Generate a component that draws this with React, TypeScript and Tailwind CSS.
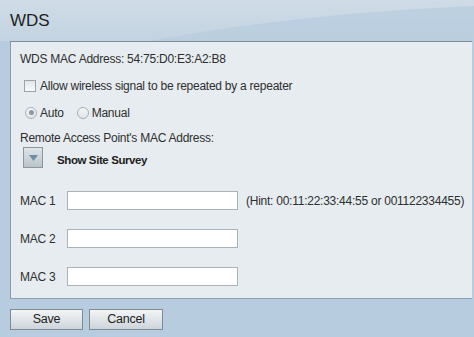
import React from 'react';

const font = { fontFamily: '"Liberation Sans", Arial, sans-serif' };

function Radio({ checked }: { checked?: boolean }) {
  return (
    <span className="flex h-[12px] w-[12px] items-center justify-center rounded-full border border-[#a7b0b6] bg-gradient-to-b from-[#f4f6f7] to-[#dfe4e7]">
      {checked && <span className="h-[5px] w-[5px] rounded-full bg-[#8f9aa1]" />}
    </span>
  );
}

function MacRow({ label, hint }: { label: string; hint?: boolean }) {
  return (
    <div className="flex h-[19px] items-center">
      <span className="w-[47px]">{label}</span>
      <input
        type="text"
        className="h-[19px] w-[171px] border border-[#a9b3b9] bg-white outline-none"
      />
      {hint && (
        <span className="ml-[8px] whitespace-nowrap">(Hint: 00:11:22:33:44:55 or 001122334455)</span>
      )}
    </div>
  );
}

export default function App() {
  return (
    <div
      className="flex h-[337px] w-[474px] flex-col overflow-hidden bg-[#b8cce0] text-[12px] tracking-[-0.25px] text-[#2f2f2f]"
      style={font}
    >
      {/* ヘッダー */}
      <div className="relative h-[41px] bg-gradient-to-b from-[#cfdce7] to-[#c3d3e1]">
        <svg className="absolute inset-0" width="474" height="41" viewBox="0 0 474 41">
          <path d="M150 41 C260 20 380 10 474 6 L474 41 Z" fill="#b9cddf" opacity="0.8" />
        </svg>
        <h1 className="relative pl-[10px] pt-[11px] text-[17px] leading-[20px] tracking-normal text-[#1f1f1f]">
          WDS
        </h1>
      </div>

      {/* パネル */}
      <div className="ml-[10px] mr-[2px] h-[257px] border-l border-t border-[#8a9aa4] border-t-[#7d8d97] bg-[#e6ecf0] pl-[9px]">
        <div className="pt-[10px] leading-[14px]">WDS MAC Address: 54:75:D0:E3:A2:B8</div>

        <div className="mt-[13px] flex h-[13px] items-center">
          <span className="ml-[4px] h-[12px] w-[12px] border border-[#99a3a9] bg-gradient-to-b from-[#e3e7ea] to-[#f8f9fa]" />
          <span className="ml-[4px]">Allow wireless signal to be repeated by a repeater</span>
        </div>

        <div className="mt-[14px] flex h-[13px] items-center">
          <span className="ml-[5px]">
            <Radio checked />
          </span>
          <span className="ml-[3px]">Auto</span>
          <span className="ml-[13px]">
            <Radio />
          </span>
          <span className="ml-[3px]">Manual</span>
        </div>

        <div className="mt-[12px] leading-[14px]">Remote Access Point's MAC Address:</div>

        <div className="mt-[2px] flex h-[21px] items-center">
          <span className="ml-[3px] flex h-[21px] w-[20px] items-center justify-center border border-[#8c979e] bg-gradient-to-b from-[#dfe5e9] to-[#b9c4cb]">
            <svg width="9" height="6" viewBox="0 0 9 6">
              <path d="M0 0 L9 0 L4.5 6 Z" fill="#6f8ea6" />
            </svg>
          </span>
          <span className="relative top-[3px] ml-[14px] text-[11.5px] font-bold tracking-[-0.4px] text-[#222]">
            Show Site Survey
          </span>
        </div>

        <div className="mt-[23px] flex flex-col gap-[19px]">
          <MacRow label="MAC 1" hint />
          <MacRow label="MAC 2" />
          <MacRow label="MAC 3" />
        </div>
      </div>
      <div className="ml-[10px] mr-[2px] h-px bg-[#8ea2ad]" />

      {/* ボタン */}
      <div className="mt-[10px] flex gap-[6px] pl-[10px]">
        <button className="h-[21px] w-[73px] border border-[#7f8b93] bg-gradient-to-b from-[#f3f5f6] to-[#cdd5da] text-[12.5px] text-[#222]">
          Save
        </button>
        <button className="h-[21px] w-[74px] border border-[#7f8b93] bg-gradient-to-b from-[#f3f5f6] to-[#cdd5da] text-[12.5px] text-[#222]">
          Cancel
        </button>
      </div>
    </div>
  );
}
